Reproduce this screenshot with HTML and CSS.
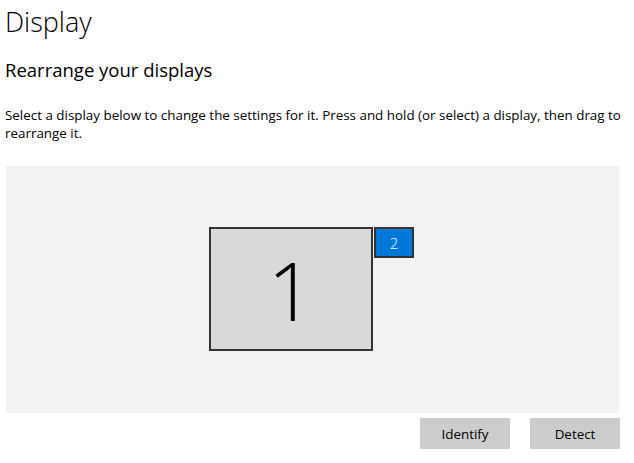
FILE: index.html
```html
<!DOCTYPE html>
<html>
<head>
<meta charset="utf-8">
<link rel="stylesheet" href="styles.css">
</head>
<body>
<div class="page">
  <h1 class="title">Display</h1>
  <h2 class="subtitle">Rearrange your displays</h2>
  <p class="desc">Select a display below to change the settings for it. Press and hold (or select) a display, then drag to rearrange it.</p>
  <div class="canvas">
    <div class="monitor primary"><span>1</span></div>
    <div class="monitor secondary"><span>2</span></div>
  </div>
  <div class="actions">
    <button class="btn">Identify</button>
    <button class="btn">Detect</button>
  </div>
</div>
</body>
</html>
```
FILE: styles.css
```css
html, body {
  margin: 0;
  padding: 0;
  background: #ffffff;
}
.page {
  width: 634px;
  height: 463px;
  font-family: "Open Sans", "Noto Sans", sans-serif;
  color: #000;
  box-sizing: border-box;
  padding: 0 0 0 5px;
}
.title {
  margin: 0;
  padding-top: 4px;
  font-size: 27px;
  font-weight: 300;
  line-height: 36px;
  height: 52px;
}
.subtitle {
  margin: 0;
  font-size: 18.5px;
  font-weight: 400;
  line-height: 28px;
  height: 50px;
}
.desc {
  margin: 0;
  font-size: 13.4px;
  line-height: 18px;
  width: 625px;
  height: 60px;
}
.canvas {
  position: relative;
  margin-left: 1px;
  width: 613px;
  height: 247px;
  background: #f2f2f2;
}
.monitor {
  position: absolute;
  box-sizing: border-box;
  border: 2px solid #333333;
  display: flex;
  align-items: center;
  justify-content: center;
}
.primary {
  left: 203px;
  top: 61px;
  width: 164px;
  height: 124px;
  background: #d9d9d9;
  font-size: 82px;
  font-weight: 200;
}
.primary span {
  line-height: 1;
}
.secondary {
  left: 368px;
  top: 61px;
  width: 40px;
  height: 31px;
  background: #0078d7;
  color: #fff;
  font-size: 15px;
  font-weight: 300;
}
.actions {
  display: flex;
  justify-content: flex-end;
  gap: 20px;
  width: 615px;
  margin-top: 5px;
}
.btn {
  width: 90px;
  height: 31px;
  border: none;
  background: #cccccc;
  font-family: "Open Sans", "Noto Sans", sans-serif;
  font-size: 13.4px;
  color: #000;
  padding: 0;
}
```
